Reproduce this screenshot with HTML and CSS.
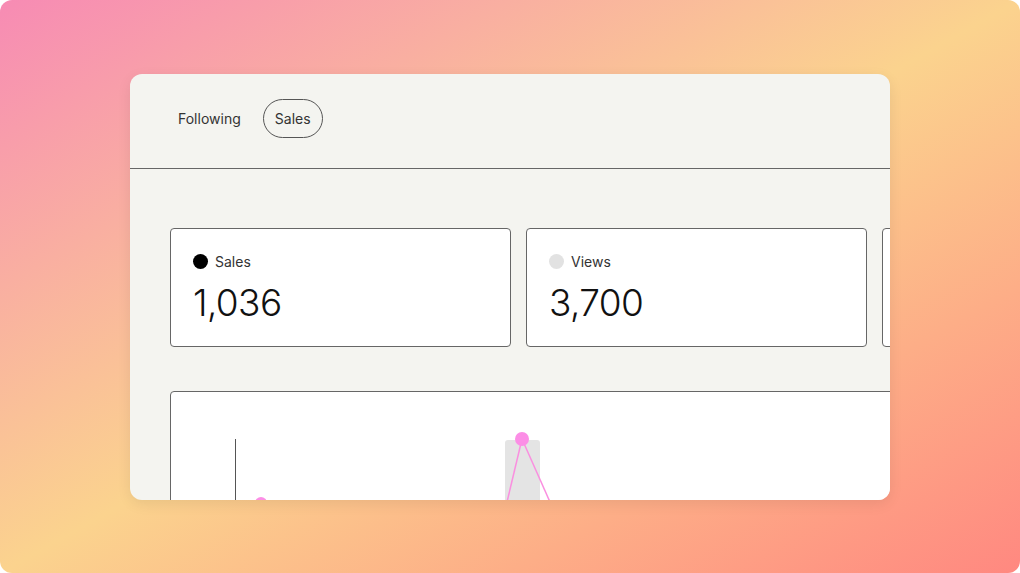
FILE: index.html
```html
<!DOCTYPE html>
<html>
<head>
<meta charset="utf-8">
<link rel="stylesheet" href="styles.css">
</head>
<body>
<div class="bg">
  <div class="panel">
    <div class="header">
      <span class="tab">Following</span>
      <span class="tab pill">Sales</span>
    </div>
    <div class="content">
      <div class="stats">
        <div class="stat">
          <div class="label"><span class="dot dark"></span>Sales</div>
          <div class="num">1,036</div>
        </div>
        <div class="stat">
          <div class="label"><span class="dot light"></span>Views</div>
          <div class="num">3,700</div>
        </div>
        <div class="stat"></div>
      </div>
      <div class="chart">
        <svg class="plot" width="760" height="200" viewBox="0 0 760 200">
          <line x1="64.5" y1="47" x2="64.5" y2="200" stroke="#555" stroke-width="1"/>
          <rect x="334" y="48" width="35" height="160" rx="3" fill="#e4e4e4"/>
          <line x1="351" y1="47" x2="336" y2="110" stroke="#fa8fe0" stroke-width="1.5"/>
          <line x1="351" y1="47" x2="379" y2="110" stroke="#fa8fe0" stroke-width="1.5"/>
          <circle cx="351" cy="47" r="7" fill="#fc8ee6"/>
          <circle cx="90" cy="111" r="6" fill="#fc8ee6"/>
        </svg>
      </div>
    </div>
  </div>
</div>
</body>
</html>
```
FILE: styles.css
```css
html, body {
  margin: 0;
  padding: 0;
  background: #ffffff;
}
.bg {
  width: 1020px;
  height: 573px;
  border-radius: 12px;
  background: linear-gradient(to bottom right, #f78bb4 0%, #fbd38e 50%, #ff8880 100%);
  padding: 74px 0 0 130px;
  box-sizing: border-box;
  overflow: hidden;
}
.panel {
  width: 760px;
  height: 426px;
  background: #f4f4f0;
  border-radius: 12px;
  overflow: hidden;
  box-shadow: 0 4px 14px rgba(0, 0, 0, 0.08);
  font-family: Inter, "Liberation Sans", sans-serif;
  color: #333;
}
.header {
  height: 95px;
  border-bottom: 1px solid #666;
  box-sizing: border-box;
  display: flex;
  align-items: center;
  padding: 0 0 5px 48px;
  gap: 23px;
}
.tab {
  font-size: 14px;
  color: #333;
}
.pill {
  width: 60px;
  height: 39px;
  border: 1px solid #555;
  border-radius: 20px;
  display: flex;
  align-items: center;
  justify-content: center;
  box-sizing: border-box;
  margin-left: -1px;
}
.content {
  padding: 59px 0 0 40px;
}
.stats {
  display: flex;
  gap: 15px;
}
.stat {
  flex: 0 0 auto;
  width: 341px;
  height: 119px;
  box-sizing: border-box;
  background: #fff;
  border: 1px solid #666;
  border-radius: 4px;
  padding: 25px 0 0 22px;
}
.label {
  display: flex;
  align-items: center;
  gap: 7px;
  font-size: 14px;
  color: #333;
  height: 15px;
}
.dot {
  width: 15px;
  height: 15px;
  border-radius: 50%;
  display: inline-block;
}
.dot.dark { background: #000; }
.dot.light { background: #e2e2e2; }
.num {
  margin-top: 11px;
  font-size: 37px;
  font-weight: 300;
  color: #111;
  letter-spacing: -0.6px;
  line-height: 46px;
}
.chart {
  margin-top: 44px;
  width: 780px;
  height: 300px;
  background: #fff;
  border: 1px solid #666;
  border-radius: 4px;
  box-sizing: border-box;
}
.plot {
  display: block;
}
```
